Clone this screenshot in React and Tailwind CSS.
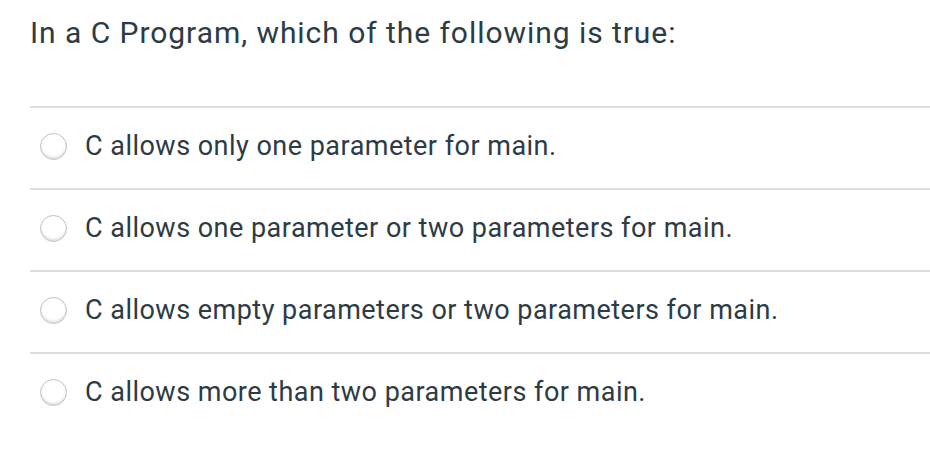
import React from 'react';

const answers = [
  'C allows only one parameter for main.',
  'C allows one parameter or two parameters for main.',
  'C allows empty parameters or two parameters for main.',
  'C allows more than two parameters for main.',
];

export default function App() {
  return (
    <div className="min-h-[450px] w-[930px] bg-white pl-[30px] text-[#2d3b45]" style={{ fontFamily: 'Roboto, "Liberation Sans", sans-serif' }}>
      <h1 className="pt-[13px] text-[30px] leading-[40px] font-normal tracking-[0.95px]">In a C Program, which of the following is true:</h1>

      <div className="mt-[53px]">
        {answers.map((text) => (
          <label key={text} className="flex h-[82px] items-center border-t-2 border-[#dedede] pb-1 pl-[10px]">
            <span className="h-[27px] w-[27px] shrink-0 rounded-full border border-[#bfbfbf] bg-white shadow-[inset_0_-2px_2px_rgba(0,0,0,0.12)]" />
            <span className="ml-[18px] text-[27px] leading-[30px] tracking-[0.48px]">{text}</span>
          </label>
        ))}
      </div>
    </div>
  );
}
